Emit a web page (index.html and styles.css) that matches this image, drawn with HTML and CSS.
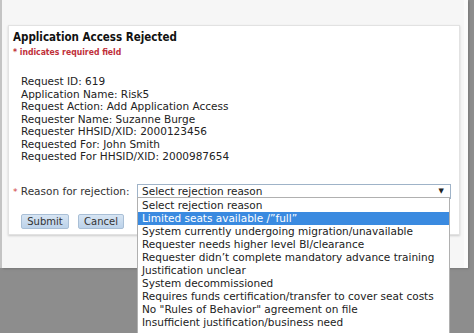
FILE: index.html
```html
<!DOCTYPE html>
<html lang="en">
<head>
    <meta charset="UTF-8">
    <title>Application Access Rejected</title>
    <link rel="stylesheet" href="styles.css">
</head>
<body>
    <div class="modal">
        <div class="panel">
            <h3>Application Access Rejected</h3>
            <p class="required-note">* indicates required field</p>

            <div class="details">
                <div>Request ID: 619</div>
                <div>Application Name: Risk5</div>
                <div>Request Action: Add Application Access</div>
                <div>Requester Name: Suzanne Burge</div>
                <div>Requester HHSID/XID: 2000123456</div>
                <div>Requested For: John Smith</div>
                <div>Requested For HHSID/XID: 2000987654</div>
            </div>

            <div class="reason-row">
                <label class="reason-label"><span class="star">*</span> Reason for rejection:</label>
                <div class="select-box">
                    <span>Select rejection reason</span>
                    <span class="arrow">&#9660;</span>
                </div>
            </div>

            <div class="actions">
                <button class="btn">Submit</button>
                <button class="btn">Cancel</button>
            </div>
        </div>
    </div>

    <!-- open dropdown list -->
    <ul class="dropdown">
        <li>Select rejection reason</li>
        <li class="selected">Limited seats available /&rdquo;full&rdquo;</li>
        <li>System currently undergoing migration/unavailable</li>
        <li>Requester needs higher level BI/clearance</li>
        <li>Requester didn&rsquo;t complete mandatory advance training</li>
        <li>Justification unclear</li>
        <li>System decommissioned</li>
        <li>Requires funds certification/transfer to cover seat costs</li>
        <li>No "Rules of Behavior" agreement on file</li>
        <li>Insufficient justification/business need</li>
    </ul>
</body>
</html>
```

FILE: styles.css
```css
/* Page backdrop */
body {
    margin: 0;
    background: #8d8d8d;
    font-family: "DejaVu Sans", Verdana, sans-serif;
    color: #222;
    position: relative;
    height: 333px;
    overflow: hidden;
}

/* Outer dialog */
.modal {
    width: 466px;
    height: 268px;
    margin-left: 2px;
    padding-top: 25px;
    box-sizing: border-box;
    background: #f6f6f6;
    border-right: 4px solid #fbfbfb;
    box-shadow: -2px 0 0 #c4c4c4, 1px 1px 2px #777;
}

/* Inner white panel */
.panel {
    margin: 0 4px 0 6px;
    height: 210px;
    background: #fff;
    border: 1px solid #e2e2e2;
    box-shadow: 0 1px 2px #ccc;
    padding: 4px 4px 0;
    box-sizing: border-box;
}

h3 {
    margin: 0;
    font-family: "DejaVu Sans Condensed", "DejaVu Sans", sans-serif;
    font-size: 11.5px;
    font-weight: bold;
    color: #111;
}

.required-note {
    margin: 3px 0 0;
    font-family: "DejaVu Sans Condensed", "DejaVu Sans", sans-serif;
    font-size: 8.6px;
    font-weight: bold;
    color: #c0303a;
}

/* Request details */
.details {
    margin: 18px 0 0 8px;
    font-size: 10.5px;
    line-height: 12.5px;
    color: #222;
}

/* Reason select */
.reason-row {
    display: flex;
    align-items: center;
    margin-top: 21px;
}

.reason-label {
    width: 124px;
    font-size: 10.5px;
    color: #333;
}

.star {
    color: #d04040;
    font-size: 9px;
}

.select-box {
    width: 314px;
    height: 15px;
    box-sizing: border-box;
    border: 1px solid #9fb3c8;
    padding: 0 6px 0 4px;
    display: flex;
    justify-content: space-between;
    align-items: center;
    font-size: 10.5px;
    color: #222;
}

.arrow {
    font-size: 7px;
}

/* Buttons */
.actions {
    display: flex;
    gap: 9px;
    margin: 15px 0 0 8px;
}

.btn {
    padding: 0;
    height: 15px;
    width: 48px;
    font-family: inherit;
    font-size: 10px;
    color: #333;
    border: 1px solid #a9bfd6;
    border-radius: 2px;
    background: linear-gradient(#d7e5f3, #bcd2ea);
}

.btn + .btn {
    width: 46px;
}

/* Open dropdown list */
.dropdown {
    position: absolute;
    top: 197px;
    left: 137px;
    width: 313px;
    margin: 0;
    padding: 1px 0 10px;
    list-style: none;
    background: #fff;
    border: 1px solid #b0b0b0;
    box-sizing: border-box;
    font-size: 10.5px;
    line-height: 13px;
    color: #222;
}

.dropdown li {
    padding-left: 4px;
}

.dropdown .selected {
    background: #3a8ae0;
    color: #fff;
}
```
